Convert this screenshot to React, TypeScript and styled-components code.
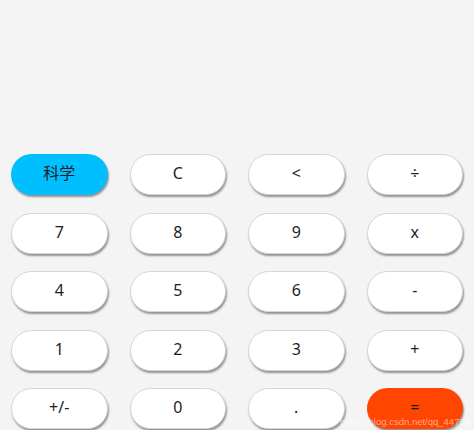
import React from "react"
import styled, { createGlobalStyle } from "styled-components"

const GlobalStyle = createGlobalStyle`
    html, body {
        margin: 0;
        padding: 0;
        background: #f4f4f4;
    }
    body {
        font-family: "Noto Sans", "Noto Sans CJK SC", sans-serif;
    }
`

const Page = styled.div`
    position: relative;
    width: 474px;
    height: 430px;
    overflow: hidden;
    display: flex;
    flex-direction: column;
    background: #f4f4f4;
`

const Screen = styled.div`
    height: 154px;
    flex-shrink: 0;
`

const Keypad = styled.div`
    display: grid;
    grid-template-columns: repeat(4, 1fr);
    grid-auto-rows: 41px;
    column-gap: 22px;
    row-gap: 17.5px;
    padding: 0 11px;
`

type KeyTone = "plain" | "blue" | "red"

const toneColor: Record<KeyTone, string> = {
    plain: "#ffffff",
    blue: "#00bfff",
    red: "#ff4500",
}

const Key = styled.button<{ $tone: KeyTone }>`
    border: 1px solid;
    border-color: ${props => props.$tone === "plain" ? "#d6d6d6" : "transparent"};
    border-radius: 21px;
    background: ${props => toneColor[props.$tone]};
    box-shadow: 1px 2px 2px rgba(0, 0, 0, 0.4);
    font-family: "Noto Sans", "Noto Sans CJK SC", sans-serif;
    font-size: 16px;
    line-height: 15px;
    color: #1e1e1e;
    display: flex;
    align-items: center;
    justify-content: center;
    padding: 0 0 2px;
    cursor: pointer;
`

const Watermark = styled.span`
    position: absolute;
    right: 4px;
    bottom: 3px;
    font-family: "Liberation Sans", Arial, sans-serif;
    font-size: 9.5px;
    line-height: 11px;
    color: rgba(255, 255, 255, 0.55);
    pointer-events: none;
    white-space: nowrap;
`

const keys: { label: string; tone?: KeyTone }[] = [
    { label: "科学", tone: "blue" },
    { label: "C" },
    { label: "<" },
    { label: "÷" },
    { label: "7" },
    { label: "8" },
    { label: "9" },
    { label: "x" },
    { label: "4" },
    { label: "5" },
    { label: "6" },
    { label: "-" },
    { label: "1" },
    { label: "2" },
    { label: "3" },
    { label: "+" },
    { label: "+/-" },
    { label: "0" },
    { label: "." },
    { label: "=", tone: "red" },
]

export default function App() {
    return (
        <Page>
            <GlobalStyle />
            <Screen />
            <Keypad>
                {keys.map(k => (
                    <Key key={k.label} $tone={k.tone ?? "plain"}>{k.label}</Key>
                ))}
            </Keypad>
            <Watermark>https://blog.csdn.net/qq_44758</Watermark>
        </Page>
    )
}
